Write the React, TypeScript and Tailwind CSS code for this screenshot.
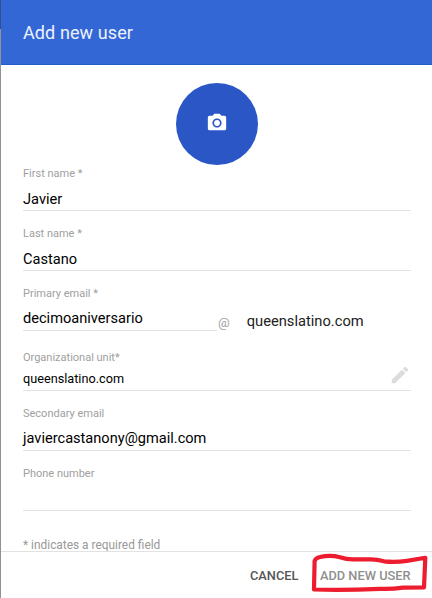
import { FC, ReactNode } from "react";
import { MdEdit, MdLocalSee } from "react-icons/md";

interface FieldProps {
  label: string;
  value?: string;
  className?: string;
  labelClassName?: string;
  valueClassName?: string;
  children?: ReactNode;
}

const Field: FC<FieldProps> = ({
  label,
  value,
  className = "h-[60px]",
  labelClassName = "",
  valueClassName = "h-[30px] pt-[9px] text-[14.6px]/[18px]",
  children,
}) => (
  <div className={className}>
    <label
      className={`block text-[11px]/[14px] text-[#a0a0a0] ${labelClassName}`}
    >
      {label}
    </label>
    <div
      className={`flex border-b border-[#e2e2e2] text-black ${valueClassName}`}
    >
      <span>{value}</span>
      {children}
    </div>
  </div>
);

export default function App() {
  return (
    <div className="flex h-[598px] w-[432px] overflow-hidden bg-white font-['Roboto',sans-serif]">
      <div className="flex w-px shrink-0 flex-col">
        <div className="h-[29px] bg-[#30508f]" />
        <div className="grow bg-[#929295]" />
      </div>
      <div className="flex grow flex-col">
        <header className="flex h-[65px] shrink-0 items-center border-b border-[#255acd] bg-[#3367d6] pt-px pl-[22px]">
          <h1 className="text-[18px]/[24px] tracking-[0.1px] text-[#edf2fc]">
            Add new user
          </h1>
        </header>

        <main className="flex h-[487px] shrink-0 flex-col overflow-hidden border-b border-[#e2e2e2] pr-[21px] pl-[22px]">
          <button
            type="button"
            className="mt-[18px] flex size-[82px] shrink-0 items-center justify-center self-center rounded-full bg-[#2a56c6] pb-[2px]"
          >
            <MdLocalSee className="size-[22px] text-white" />
          </button>

          <div className="mt-[2px]">
            <Field label="First name *" value="Javier" />
            <Field label="Last name *" value="Castano" />
            <div className="flex h-[64px]">
              <Field
                label="Primary email *"
                value="decimoaniversario"
                className="w-[194px]"
                valueClassName="h-[30px] pt-[8px] text-[14.6px]/[18px]"
              />
              <span className="mt-[28px] ml-px text-[13px]/[16px] text-[#a0a0a0]">
                @
              </span>
              <span className="mt-[25px] ml-[17px] text-[14.7px]/[18px] text-[#212121]">
                queenslatino.com
              </span>
            </div>
            <Field
              label="Organizational unit*"
              value="queenslatino.com"
              className="h-[56px]"
              valueClassName="h-[26px] justify-between pt-[6px] text-[12.7px]/[16px]"
            >
              <MdEdit className="-mt-[7px] size-[22px] text-[#dcdcdc]" />
            </Field>
            <Field
              label="Secondary email"
              value="javiercastanony@gmail.com"
              valueClassName="h-[30px] pt-[8px] text-[14.6px]/[18px]"
            />
            <Field label="Phone number" />
          </div>

          <p className="mt-[10px] text-[11.9px]/[16px] text-[#999]">
            * indicates a required field
          </p>
        </main>

        <footer className="flex h-[46px] items-center pt-px pl-[249px]">
          <button
            type="button"
            className="w-[49px] text-left text-[12.8px]/[16px] font-medium text-[#555]"
          >
            CANCEL
          </button>
          <div className="relative ml-[21px]">
            <button
              type="button"
              className="block text-[12.8px]/[16px] font-medium whitespace-nowrap text-[#8f8f8f]"
            >
              ADD NEW USER
            </button>
            {/* hand-drawn marker around the submit button */}
            <svg
              viewBox="310 550 122 48"
              className="pointer-events-none absolute -top-[18px] -left-[10px] h-[48px] w-[122px]"
              fill="none"
              stroke="#ed1c2e"
              strokeWidth="4.2"
              strokeLinecap="round"
              strokeLinejoin="round"
            >
              <path d="M314 589.500L314.600 561Q315.500 558 320 557Q330 554.500 340 557.200Q347 559.500 354 559.300H371Q377 559.500 384 561.300Q395 562.500 407 560.800L425.300 557.800L424 587.300L403 587.700Q391 589.300 380 588.800Q344 590.500 314 589.500Z" />
            </svg>
          </div>
        </footer>
      </div>
    </div>
  );
}
